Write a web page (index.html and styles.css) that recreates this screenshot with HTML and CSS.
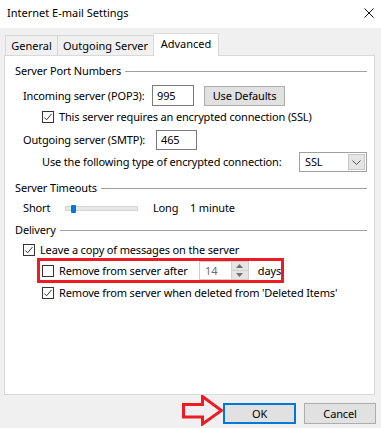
FILE: index.html
```html
<!DOCTYPE html>
<html>
<head>
<meta charset="utf-8">
<title>Internet E-mail Settings</title>
<link rel="stylesheet" href="styles.css">
</head>
<body>
<div class="window">
  <div class="titlebar">
    <span class="title">Internet E-mail Settings</span>
    <svg class="close" width="10" height="10" viewBox="0 0 10 10"><path d="M0.5 0.5 L9.5 9.5 M9.5 0.5 L0.5 9.5" stroke="#111" stroke-width="1" fill="none"/></svg>
  </div>
  <div class="tabs">
    <div class="tab t-gen">General</div>
    <div class="tab t-out">Outgoing Server</div>
    <div class="tab active">Advanced</div>
  </div>
  <div class="panel">
    <div class="sec-head"><span>Server Port Numbers</span><span class="rule"></span></div>
    <div class="row r-in">
      <span class="lbl lbl-in">Incoming server (POP3):</span>
      <span class="input w-in">995</span>
      <span class="btn btn-def">Use Defaults</span>
    </div>
    <div class="row r-ssl ind2">
      <span class="cb"><svg width="11" height="11" viewBox="0 0 11 11"><path d="M1.5 5.5 L4 8 L9.5 1.5" stroke="#333" stroke-width="1.1" fill="none"/></svg></span>
      <span>This server requires an encrypted connection (SSL)</span>
    </div>
    <div class="row r-out">
      <span class="lbl lbl-out">Outgoing server (SMTP):</span>
      <span class="input w-out">465</span>
    </div>
    <div class="row r-enc ind2">
      <span class="lbl lbl-enc">Use the following type of encrypted connection:</span>
      <span class="select"><span class="sel-val">SSL</span><span class="sel-btn"><svg width="9" height="5" viewBox="0 0 9 5"><path d="M0.5 0.5 L4.5 4.5 L8.5 0.5" stroke="#555" stroke-width="1" fill="none"/></svg></span></span>
    </div>
    <div class="sec-head h2"><span>Server Timeouts</span><span class="rule"></span></div>
    <div class="row r-slide">
      <span class="lbl lbl-short">Short</span>
      <span class="track"><span class="thumb"></span></span>
      <span class="lbl lbl-long">Long</span>
      <span>1 minute</span>
    </div>
    <div class="sec-head h3"><span>Delivery</span><span class="rule"></span></div>
    <div class="row r-leave">
      <span class="cb"><svg width="11" height="11" viewBox="0 0 11 11"><path d="M1.5 5.5 L4 8 L9.5 1.5" stroke="#333" stroke-width="1.1" fill="none"/></svg></span>
      <span>Leave a copy of messages on the server</span>
    </div>
    <div class="highlight">
      <span class="cb"></span>
      <span class="lbl lbl-remove">Remove from server after</span>
      <span class="spin"><span class="spin-val">14</span><span class="spin-btns"><span class="spin-b"><svg width="7" height="4" viewBox="0 0 7 4"><path d="M0 4 L3.5 0 L7 4 Z" fill="#707070"/></svg></span><span class="spin-b"><svg width="7" height="4" viewBox="0 0 7 4"><path d="M0 0 L3.5 4 L7 0 Z" fill="#707070"/></svg></span></span></span>
      <span class="days">days</span>
    </div>
    <div class="row r-deleted ind2">
      <span class="cb"><svg width="11" height="11" viewBox="0 0 11 11"><path d="M1.5 5.5 L4 8 L9.5 1.5" stroke="#333" stroke-width="1.1" fill="none"/></svg></span>
      <span>Remove from server when deleted from 'Deleted Items'</span>
    </div>
  </div>
  <div class="footer">
    <svg class="arrow" width="42" height="31" viewBox="0 0 42 31"><path d="M1.5 9.5 L20.5 9.5 L20.5 1.5 L39.5 15.5 L20.5 29 L20.5 22 L1.5 22 Z" fill="none" stroke="#ed1c24" stroke-width="3" stroke-linejoin="miter"/></svg>
    <span class="btn btn-ok">OK</span>
    <span class="btn btn-cancel">Cancel</span>
  </div>
</div>
</body>
</html>
```

FILE: styles.css
```css
* { box-sizing: border-box; }
html, body { margin: 0; padding: 0; }
body {
  width: 381px;
  height: 428px;
  overflow: hidden;
  background: #f0f0f0;
  font-family: "Noto Sans", "Open Sans", sans-serif;
  font-size: 11px;
  line-height: 16px;
  letter-spacing: -0.15px;
  color: #000;
}
.window { width: 381px; height: 428px; display: flex; flex-direction: column; }

.titlebar {
  height: 28px;
  background: #fff;
  display: flex;
  align-items: center;
  justify-content: space-between;
  padding: 0 7px 2px 7px;
}
.title { font-size: 11px; letter-spacing: 0; }
.close { display: block; }

.tabs {
  display: flex;
  align-items: flex-end;
  height: 27px;
  padding-left: 5px;
}
.tab {
  height: 20px;
  border: 1px solid #d9d9d9;
  border-bottom: none;
  background: #f0f0f0;
  display: flex;
  align-items: center;
  justify-content: center;
  margin-right: -1px;
  letter-spacing: 0;
}
.t-gen { width: 53px; }
.t-out { width: 97px; }
.tab.active {
  width: 66px;
  background: #fff;
  position: relative;
  z-index: 1;
  margin-bottom: -1px;
  padding-bottom: 2px;
  height: 23px;
}

.panel {
  margin: 0 6px 0 4px;
  height: 340px;
  background: #fff;
  border: 1px solid #d9d9d9;
  padding: 7px 7px 0 10px;
}

.sec-head {
  display: flex;
  align-items: center;
  height: 16px;
}
.sec-head .rule {
  flex: 1;
  height: 1px;
  background: #a0a0a0;
  margin-left: 4px;
  margin-top: 1px;
}
.h2 { margin-top: 8px; }
.h3 { margin-top: 6px; }

.row { display: flex; align-items: center; padding-left: 8px; }
.ind2 { padding-left: 27px; }

.r-in { margin-top: 6px; height: 21px; }
.r-ssl { margin-top: 3px; height: 16px; }
.r-out { margin-top: 5px; height: 20px; }
.r-enc { margin-top: 2px; height: 20px; }
.r-slide { margin-top: 4px; height: 16px; }
.r-leave { margin-top: 4px; height: 16px; }
.r-deleted { margin-top: 2px; height: 16px; }

.lbl { flex: none; white-space: nowrap; }
.lbl-in { width: 129px; }
.lbl-out { width: 133px; }
.lbl-enc { width: 257px; }
.lbl-short { width: 42px; }
.lbl-long { width: 37px; margin-left: 15px; }
.lbl-remove { width: 140px; }

.input {
  height: 20px;
  border: 1px solid #7a7a7a;
  background: #fff;
  display: flex;
  align-items: center;
  padding-left: 4px;
}
.w-in { width: 42px; height: 21px; }
.w-out { width: 41px; }

.btn {
  display: flex;
  align-items: center;
  justify-content: center;
  background: #e1e1e1;
  border: 1px solid #adadad;
}
.btn-def { width: 81px; height: 20px; margin-left: 10px; }

.cb {
  flex: none;
  width: 12px;
  height: 12px;
  border: 1px solid #333;
  background: #fff;
  margin-right: 5px;
  display: flex;
  align-items: center;
  justify-content: center;
}
.cb svg { display: block; }

.select {
  width: 69px;
  height: 20px;
  border: 1px solid #a0a0a0;
  display: flex;
  align-items: stretch;
  padding: 1px;
}
.sel-val { flex: 1; padding-left: 4px; display: flex; align-items: center; }
.sel-btn {
  width: 17px;
  background: #e5e5e5;
  border: 1px solid #c6c6c6;
  display: flex;
  align-items: center;
  justify-content: center;
}

.track {
  width: 73px;
  height: 5px;
  background: #e7e7e7;
  border: 1px solid #d6d6d6;
  display: flex;
  align-items: center;
  padding-left: 5px;
  margin-top: 1px;
}
.thumb {
  width: 5px;
  height: 8px;
  background: #0078d7;
  border-radius: 1px;
}

.highlight {
  margin-left: 22px;
  width: 247px;
  height: 25px;
  border: 3px solid #ed1c24;
  display: flex;
  align-items: center;
  padding-left: 2px;
}
.spin {
  width: 52px;
  height: 19px;
  border: 1px solid #cccccc;
  display: flex;
}
.spin-val { flex: 1; color: #6d6d6d; padding-left: 5px; display: flex; align-items: center; }
.spin-btns { width: 17px; display: flex; flex-direction: column; background: #e5e5e5; border-left: 1px solid #d0d0d0; }
.spin-b { flex: 1; display: flex; align-items: center; justify-content: center; }
.spin-b + .spin-b { border-top: 1px solid #d0d0d0; }
.days { margin-left: 9px; }

.footer {
  flex: 1;
  display: flex;
  justify-content: flex-end;
  align-items: flex-start;
  padding: 0 5px 0 0;
}
.arrow { display: block; margin-right: -1px; }
.btn-ok {
  width: 73px;
  height: 21px;
  margin-top: 8px;
  border: 2px solid #0078d7;
}
.btn-cancel {
  width: 72px;
  height: 21px;
  margin-top: 8px;
  margin-left: 8px;
}
```
